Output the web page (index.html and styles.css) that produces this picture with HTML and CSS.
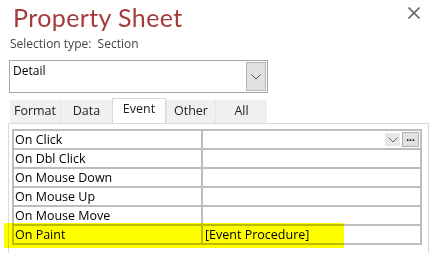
FILE: index.html
```html
<!DOCTYPE html>
<html>
<head>
<meta charset="utf-8">
<link rel="stylesheet" href="styles.css">
</head>
<body>
<div class="sheet">
  <div class="header">
    <div class="title">Property Sheet</div>
    <svg class="close" width="12" height="12" viewBox="0 0 12 12"><path d="M0.5 0.5 L11.5 11.5 M11.5 0.5 L0.5 11.5" stroke="#6b6b6b" stroke-width="1.6" fill="none"/></svg>
  </div>
  <div class="seltype">Selection type:&nbsp; Section</div>
  <div class="combo">
    <div class="combo-text">Detail</div>
    <div class="combo-btn"><svg width="10" height="6" viewBox="0 0 10 6"><path d="M0.5 0.5 L5 5 L9.5 0.5" stroke="#555" stroke-width="1" fill="none"/></svg></div>
  </div>
  <div class="tabs">
    <div class="tab">Format</div>
    <div class="tab">Data</div>
    <div class="tab active">Event</div>
    <div class="tab">Other</div>
    <div class="tab">All</div>
  </div>
  <div class="panel">
    <div class="grid">
      <div class="cell">On Click</div>
      <div class="cell value">
        <span class="drop"><svg width="10" height="6" viewBox="0 0 10 6"><path d="M0.5 0.5 L5 5 L9.5 0.5" stroke="#666" stroke-width="1" fill="none"/></svg></span>
        <span class="dots">...</span>
      </div>
      <div class="cell">On Dbl Click</div>
      <div class="cell value"></div>
      <div class="cell">On Mouse Down</div>
      <div class="cell value"></div>
      <div class="cell">On Mouse Up</div>
      <div class="cell value"></div>
      <div class="cell">On Mouse Move</div>
      <div class="cell value"></div>
      <div class="cell">On Paint</div>
      <div class="cell value">[Event Procedure]</div>
    </div>
  </div>
  <div class="highlight"></div>
</div>
</body>
</html>
```
FILE: styles.css
```css
html, body {
  margin: 0;
  padding: 0;
  background: #ffffff;
}
body {
  font-family: "Open Sans", "Noto Sans", sans-serif;
  width: 430px;
  height: 253px;
  overflow: hidden;
}
.sheet {
  position: relative;
  height: 253px;
}
.header {
  display: flex;
  justify-content: space-between;
  align-items: flex-start;
  height: 32px;
}
.title {
  margin-left: 13px;
  padding-top: 2px;
  font-family: "Lato", "Open Sans", sans-serif;
  font-size: 25px;
  line-height: 30px;
  color: #a63b3e;
  letter-spacing: 0.4px;
}
.close {
  margin-top: 7px;
  margin-right: 10px;
}
.seltype {
  margin-top: 4px;
  margin-left: 10px;
  font-size: 12px;
  line-height: 16px;
  color: #444444;
}
.combo {
  margin-top: 8px;
  margin-left: 9px;
  width: 257px;
  height: 31px;
  border: 1px solid #a6a6a6;
  display: flex;
  justify-content: space-between;
}
.combo-text {
  padding-left: 3px;
  padding-top: 2px;
  font-size: 12px;
  line-height: 16px;
  color: #000;
}
.combo-btn {
  width: 20px;
  margin: 1px;
  background: #e1e1e1;
  border: 1px solid #b5b5b5;
  display: flex;
  align-items: center;
  justify-content: center;
  box-sizing: border-box;
}
.tabs {
  margin-top: 4px;
  margin-left: 10px;
  height: 26px;
  display: flex;
  align-items: flex-end;
}
.tab {
  height: 23px;
  box-sizing: border-box;
  background: #f0f0f0;
  border-left: 1px solid #e3e3e3;
  font-size: 12.5px;
  line-height: 22px;
  color: #222;
  text-align: center;
}
.tab:nth-child(1) { width: 50px; border-left: none; }
.tab:nth-child(2) { width: 52px; }
.tab:nth-child(3) { width: 54px; }
.tab:nth-child(4) { width: 49px; }
.tab:nth-child(5) { width: 52px; }
.tab.active {
  height: 25px;
  background: #ffffff;
  border: 1px solid #d9d9d9;
  border-bottom: none;
  line-height: 20px;
}
.panel {
  margin-left: 8px;
  width: 415px;
  height: 129px;
  border: 1px solid #dadada;
  border-bottom: none;
  padding: 5px 1px 0 3px;
}
.grid {
  display: grid;
  grid-template-columns: 187px 217px;
  grid-auto-rows: 17px;
  gap: 2px;
  padding: 2px;
  background: #bdbdbd;
  width: 406px;
}
.cell {
  background: #ffffff;
  font-size: 12.5px;
  line-height: 17px;
  padding-left: 1px;
  color: #000;
  white-space: nowrap;
  overflow: hidden;
}
.cell.value {
  padding-left: 2px;
  display: flex;
  justify-content: flex-end;
  align-items: center;
  gap: 2px;
}
.cell.value:last-child {
  justify-content: flex-start;
}
.drop {
  width: 15px;
  height: 13px;
  background: #e8e8e8;
  display: flex;
  align-items: center;
  justify-content: center;
}
.dots {
  width: 17px;
  height: 15px;
  box-sizing: border-box;
  background: #e1e1e1;
  border: 1px solid #b0b0b0;
  font-size: 10px;
  font-weight: bold;
  line-height: 9px;
  text-align: center;
  margin-right: 1px;
}
.highlight {
  position: absolute;
  left: 4px;
  top: 223px;
  width: 340px;
  height: 25px;
  background: #ffff00;
  mix-blend-mode: multiply;
}
```
